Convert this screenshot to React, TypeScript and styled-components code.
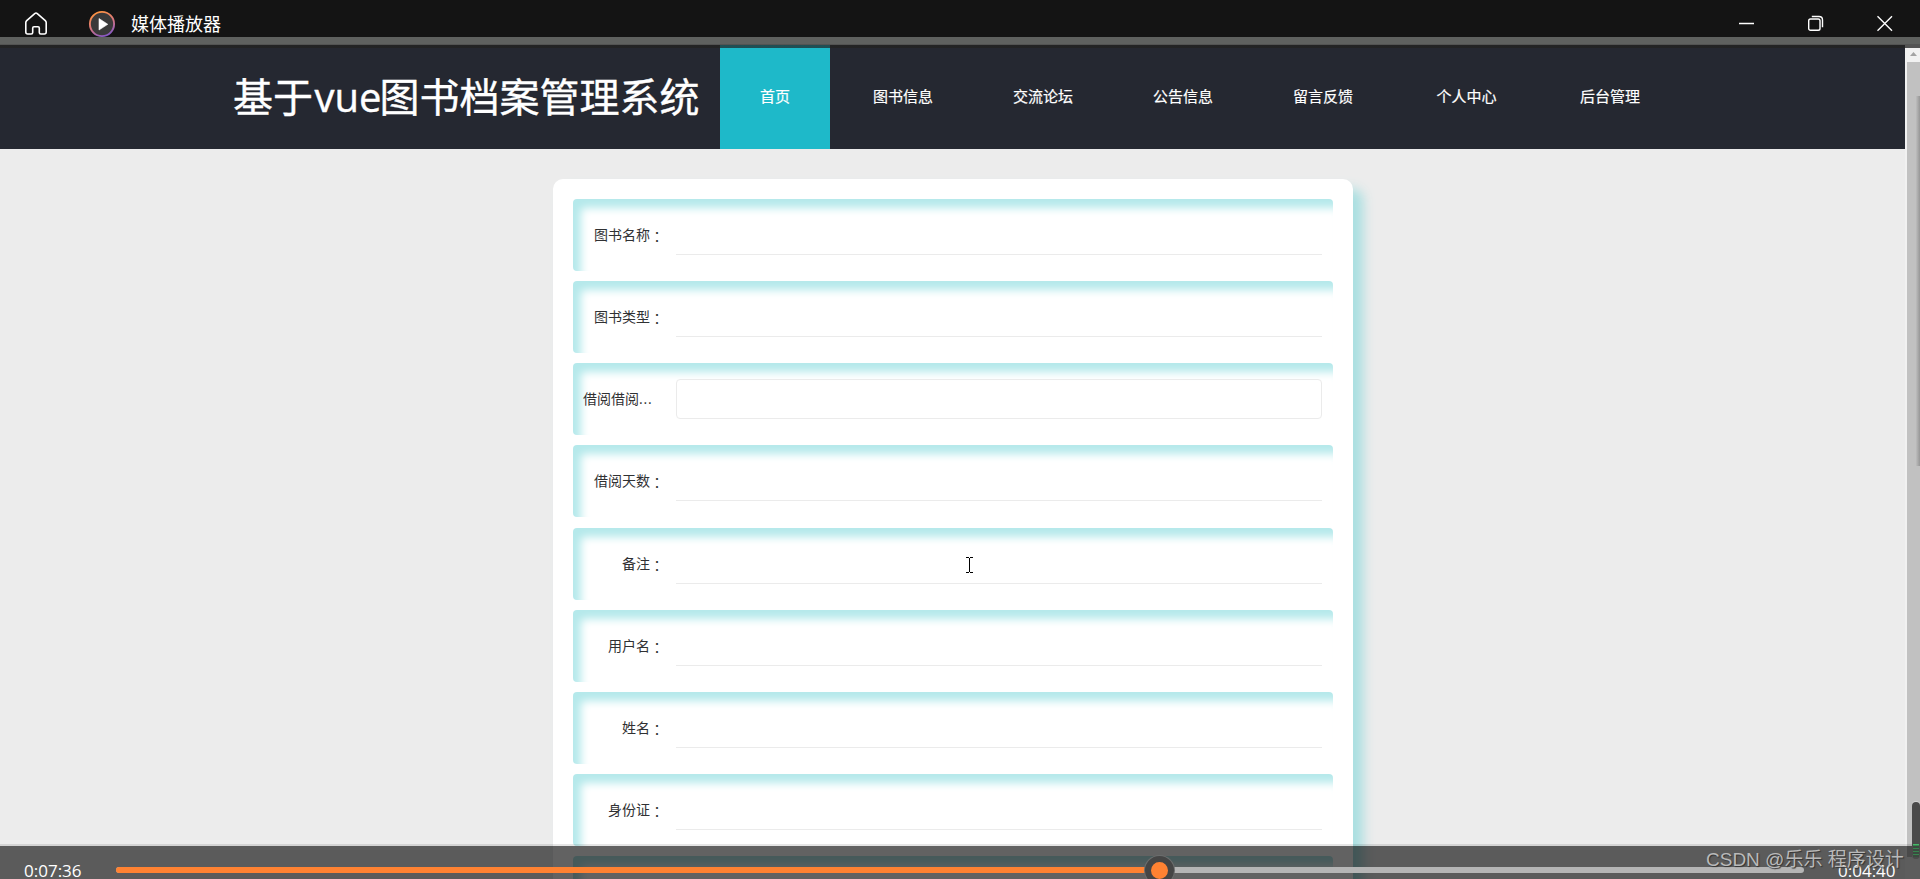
import React from 'react';
import styled, { createGlobalStyle } from 'styled-components';

const GlobalStyle = createGlobalStyle`
  * { box-sizing: border-box; }
  body {
    margin: 0;
    overflow: hidden;
    background: #ececec;
    font-family: "Open Sans", "Noto Sans CJK SC", sans-serif;
  }
`;

const Screen = styled.div`
  position: relative;
  width: 1920px;
  height: 879px;
  overflow: hidden;
  display: flex;
  flex-direction: column;
  background: #ececec;
`;

const TitleBar = styled.header`
  height: 37px;
  flex: none;
  display: flex;
  align-items: flex-start;
  padding: 0 11px 0 22px;
  background: #141414;
  color: #fff;
`;

const HomeIcon = styled.svg`
  margin: 10px 0 0 2px;
`;

const PlayerLogo = styled.svg`
  margin: 10px 0 0 40px;
  overflow: visible;
`;

const AppName = styled.span`
  margin: 10px 0 0 15px;
  font-size: 18px;
  line-height: 29px;
`;

const WindowButtons = styled.div`
  margin: 15px 16px 0 auto;
  display: flex;
  gap: 53px;
`;

const Band = styled.div`
  height: 8px;
  flex: none;
  background: #5f615f;
  border-bottom: 1px solid #535453;
`;

const Body = styled.div`
  flex: 1;
  display: flex;
  min-height: 0;
`;

const Page = styled.main`
  width: 1905px;
  flex: none;
`;

const Header = styled.div`
  height: 104px;
  display: flex;
  padding-left: 233px;
  background: linear-gradient(rgba(34, 34, 32, 0.75) 3px, transparent 3px), #252831;
`;

const SiteTitle = styled.h1`
  width: 487px;
  margin: 0;
  color: #fff;
  font-size: 40px;
  font-weight: 400;
  line-height: 104px;
  white-space: nowrap;
  -webkit-text-stroke: 0.4px #fff;
`;

const Latin = styled.span`
  margin: 0 -2px 0 1.5px;
`;

const NavItem = styled.a<{ $active?: boolean; $gap?: number }>`
  margin-left: ${(p) => p.$gap ?? 0}px;
  padding: 0 40px;
  color: #fff;
  font-size: 15px;
  line-height: 103px;
  white-space: nowrap;
  -webkit-text-stroke: 0.2px #fff;
  background: ${(p) => (p.$active ? 'linear-gradient(rgba(34, 34, 34, 0.7) 3px, transparent 3px), #1eb9c9' : 'none')};
`;

const FormCard = styled.form`
  width: 800px;
  height: 760px;
  margin: 30px 0 0 553px;
  padding: 20px;
  display: flex;
  flex-direction: column;
  gap: 10.15px;
  background: #fff;
  border-radius: 10px;
  box-shadow: 10px 10px 12px #a9dfe1;
`;

const FormRow = styled.div`
  height: 72px;
  flex: none;
  display: flex;
  align-items: center;
  padding: 0 11px 0 10px;
  border-radius: 4px;
  box-shadow: inset 8px 9px 9px #b5e9eb;
`;

const Label = styled.label<{ $clipped?: boolean }>`
  width: 93px;
  height: 40px;
  padding-right: 12px;
  color: #303133;
  font-size: 14px;
  line-height: 40px;
  white-space: nowrap;
  text-align: ${(p) => (p.$clipped ? 'left' : 'right')};
`;

const Colon = styled.span`
  display: inline-block;
  height: 40px;
  padding-top: 1px;
  vertical-align: top;
  font-family: "Noto Sans CJK JP", sans-serif;
`;

const Dots = styled.span`
  letter-spacing: 0.8px;
`;

const Field = styled.div<{ $boxed?: boolean }>`
  flex: 1;
  height: 40px;
  border: ${(p) => (p.$boxed ? '1px solid #ebebeb' : '0 solid #ebebeb')};
  border-bottom-width: 1px;
  border-radius: ${(p) => (p.$boxed ? 4 : 0)}px;
`;

const Scrollbar = styled.div`
  flex: 1;
  padding-left: 2px;
  border-top: 3px solid #535353;
  background: #f1f1f1;
`;

const ArrowUp = styled.svg`
  display: block;
  height: 14px;
`;

const ScrollThumb = styled.div`
  height: 795px;
  background: #c1c1c1;
`;

const InnerShade = styled.div`
  position: absolute;
  top: 96px;
  right: 0;
  width: 4px;
  height: 370px;
  background: linear-gradient(90deg, #bdbdbd, #969696);
`;

const Meter = styled.div`
  position: absolute;
  top: 802px;
  right: 0;
  width: 8px;
  height: 57px;
  padding-top: 42px;
  border-radius: 4px;
  background: #4a4a4a;
  box-shadow: 0 -1px 0 #d6d6d6;
`;

const MeterLines = styled.div`
  height: 13px;
  margin: 0 1px;
  background: repeating-linear-gradient(#37844f 0 1px, #3c4a40 1px 3px);
  border-top: 1px solid #45b868;
`;

const TextCursor = styled.svg`
  position: absolute;
  left: 966px;
  top: 557px;
`;

const PlayerBar = styled.footer`
  position: absolute;
  left: 0;
  right: 0;
  bottom: 0;
  height: 35px;
  display: flex;
  padding: 0 24px;
  border-top: 2px solid rgba(0, 0, 0, 0.1);
  background: rgba(0, 0, 0, 0.614) padding-box;
  color: #fff;
`;

const Time = styled.span<{ $end?: boolean }>`
  width: 92px;
  padding-left: ${(p) => (p.$end ? 34 : 0)}px;
  font-size: 17px;
  line-height: 49px;
`;

const Track = styled.div`
  width: 1688px;
  height: 6px;
  margin-top: 21px;
  flex: none;
  display: flex;
  border-radius: 3px;
  background: #b5b5b5;
`;

const Played = styled.div`
  width: 1044px;
  flex: none;
  border-radius: 3px 0 0 3px;
  background: #ff8232;
`;

const Knob = styled.div`
  width: 29px;
  height: 29px;
  margin: -11px 0 0 -15px;
  flex: none;
  border: 6.5px solid #454545;
  border-radius: 50%;
  background: #ff8232;
  box-shadow: 0 0 0 1px #6b6d6d;
`;

const Watermark = styled.div`
  position: absolute;
  left: 1706px;
  top: 845px;
  color: #b9b9b9;
  font-family: "Liberation Sans", "Noto Sans CJK SC", sans-serif;
  font-size: 19px;
  line-height: 29px;
  white-space: nowrap;
  text-shadow: 1px 1px 1px #333;
`;

const navItems = [
  { label: '首页', active: true },
  { label: '图书信息', gap: 3 },
  { label: '交流论坛' },
  { label: '公告信息' },
  { label: '留言反馈' },
  { label: '个人中心', gap: 3.5 },
  { label: '后台管理', gap: 3.5 },
];

const fields = [
  { label: '图书名称' },
  { label: '图书类型' },
  { label: '借阅借阅', boxed: true },
  { label: '借阅天数' },
  { label: '备注' },
  { label: '用户名' },
  { label: '姓名' },
  { label: '身份证' },
  { label: '' },
];

export default function App() {
  return (
    <Screen>
      <GlobalStyle />
      <TitleBar>
        <HomeIcon width="24" height="27" viewBox="0 0 24 27" fill="none" stroke="#fff" strokeWidth="1.6" strokeLinejoin="round">
          <path d="M1.8 12.6c0-.8.3-1.4.9-2l8-7c.8-.7 1.8-.7 2.6 0l8 7c.6.6.9 1.2.9 2V22c0 1.2-.7 2-1.9 2h-3.5c-.9 0-1.5-.6-1.5-1.5V18c0-.8-.5-1.3-1.3-1.3h-4c-.8 0-1.3.5-1.3 1.3v4.5c0 .9-.6 1.5-1.5 1.5H3.7c-1.2 0-1.9-.8-1.9-2z" />
        </HomeIcon>
        <PlayerLogo width="28" height="27" viewBox="0 0 28 27">
          <defs>
            <linearGradient id="ring" x1="0.3" y1="0" x2="0.7" y2="1">
              <stop offset="0" stopColor="#ff9440" />
              <stop offset="0.5" stopColor="#d9777f" />
              <stop offset="1" stopColor="#8458c8" />
            </linearGradient>
          </defs>
          <circle cx="14" cy="14" r="12.1" fill="#3a3a3a" stroke="url(#ring)" strokeWidth="1.9" />
          <path d="M11 8.5v11.5l8.8-5.7z" fill="#fff" stroke="#fff" strokeWidth="0.6" strokeLinejoin="round" />
        </PlayerLogo>
        <AppName>媒体播放器</AppName>
        <WindowButtons>
          <svg width="16" height="17" stroke="#fff" strokeWidth="1.5">
            <path d="M0 8.5h15" />
          </svg>
          <svg width="16" height="17" fill="none" stroke="#fff" strokeWidth="1.4">
            <rect x="0.7" y="4" width="11.3" height="11.3" rx="1.8" />
            <path d="M3.8 1.5H11c2 0 3.5 1.5 3.5 3.5v7.2" />
          </svg>
          <svg width="16" height="17" stroke="#fff" strokeWidth="1.4">
            <path d="M0.5 1.2l14.5 14.5M15 1.2L.5 15.7" />
          </svg>
        </WindowButtons>
      </TitleBar>
      <Band />
      <Body>
        <Page>
          <Header>
            <SiteTitle>
              基于<Latin>vue</Latin>图书档案管理系统
            </SiteTitle>
            {navItems.map((item) => (
              <NavItem key={item.label} $active={item.active} $gap={item.gap}>
                {item.label}
              </NavItem>
            ))}
          </Header>
          <FormCard>
            {fields.map((field, i) => (
              <FormRow key={i}>
                <Label $clipped={field.boxed}>
                  {field.label}
                  {field.boxed ? <Dots>...</Dots> : field.label && <Colon>：</Colon>}
                </Label>
                <Field $boxed={field.boxed} />
              </FormRow>
            ))}
          </FormCard>
        </Page>
        <Scrollbar>
          <ArrowUp width="13" height="14">
            <path d="M3 8l3.5-4L10 8z" fill="#a3a3a3" />
          </ArrowUp>
          <ScrollThumb />
        </Scrollbar>
      </Body>
      <InnerShade />
      <TextCursor width="7" height="16" fill="none" stroke="#000" strokeWidth="1" shapeRendering="crispEdges">
        <path d="M0 .5h3M4 .5h3M3.5 1v14M0 15.5h3M4 15.5h3" />
      </TextCursor>
      <PlayerBar>
        <Time>0:07:36</Time>
        <Track>
          <Played />
          <Knob />
        </Track>
        <Time $end>0:04:40</Time>
      </PlayerBar>
      <Meter>
        <MeterLines />
      </Meter>
      <Watermark>CSDN @乐乐 程序设计</Watermark>
    </Screen>
  );
}
